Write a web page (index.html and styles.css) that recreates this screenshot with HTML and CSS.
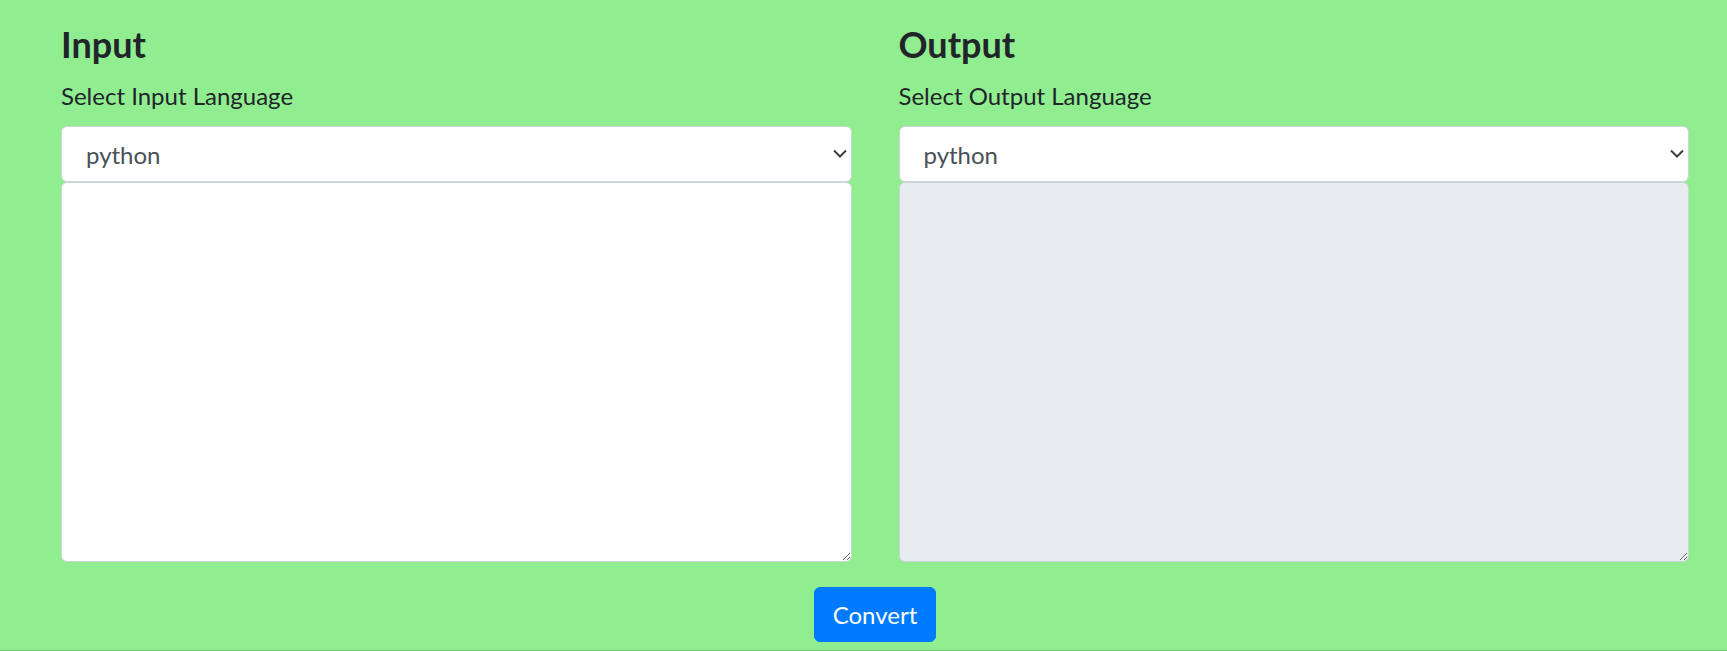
FILE: index.html
```html
<!DOCTYPE html>
<html lang="en">
<head>
  <meta charset="UTF-8">
  <meta name="viewport" content="width=device-width, initial-scale=1.0">
  <title>Code Converter</title>
  <link rel="stylesheet" href="styles.css">
</head>
<body>
  <main class="converter">
    <div class="panes">
      <section class="pane">
        <h2>Input</h2>
        <label for="input-lang">Select Input Language</label>
        <div class="select-wrap">
          <select id="input-lang" class="lang-select">
            <option>python</option>
            <option>java</option>
            <option>javascript</option>
            <option>c++</option>
          </select>
          <svg class="chevron" width="14" height="9" viewBox="0 0 14 9"><path d="M1 1.5 L7 7.5 L13 1.5" fill="none" stroke="#3c4043" stroke-width="2"/></svg>
        </div>
        <textarea id="input-code" class="code-box"></textarea>
      </section>
      <section class="pane">
        <h2>Output</h2>
        <label for="output-lang">Select Output Language</label>
        <div class="select-wrap">
          <select id="output-lang" class="lang-select">
            <option>python</option>
            <option>java</option>
            <option>javascript</option>
            <option>c++</option>
          </select>
          <svg class="chevron" width="14" height="9" viewBox="0 0 14 9"><path d="M1 1.5 L7 7.5 L13 1.5" fill="none" stroke="#3c4043" stroke-width="2"/></svg>
        </div>
        <textarea id="output-code" class="code-box readonly" readonly></textarea>
      </section>
    </div>
    <div class="actions">
      <button type="button" class="btn-convert">Convert</button>
    </div>
  </main>
</body>
</html>
```

FILE: styles.css
```css
body {
  margin: 0;
  background: #90ee90;
  font-family: Lato, "Segoe UI", "Open Sans", sans-serif;
  color: #212529;
}

.converter {
  padding: 23px 38px 8px 61px;
  border-bottom: 1px solid #70c86e;
}

.panes {
  display: grid;
  grid-template-columns: 1fr 1fr;
  column-gap: 47px;
}

.pane h2 {
  margin: 0 0 12px;
  font-size: 36px;
  line-height: 1.2;
  font-weight: 700;
}

.pane label {
  display: block;
  font-size: 24px;
  line-height: 36px;
  margin-bottom: 12px;
}

.select-wrap {
  position: relative;
}

.lang-select {
  display: block;
  width: 100%;
  height: 56px;
  box-sizing: border-box;
  padding: 0 40px 0 24px;
  border: 1px solid #ced4da;
  border-radius: 6px;
  background: #ffffff;
  color: #495057;
  font-family: inherit;
  font-size: 24px;
  -webkit-appearance: none;
  appearance: none;
}

.chevron {
  position: absolute;
  right: 5px;
  top: 23px;
  pointer-events: none;
}

.code-box {
  display: block;
  width: 100%;
  height: 380px;
  box-sizing: border-box;
  margin: 0;
  padding: 9px 18px;
  border: 1px solid #ced4da;
  border-radius: 6px;
  background: #ffffff;
  font-family: inherit;
  font-size: 24px;
  resize: vertical;
}

.code-box.readonly {
  background: #e9ecef;
}

.actions {
  display: flex;
  justify-content: center;
  margin-top: 25px;
}

.btn-convert {
  height: 55px;
  padding: 0 18px;
  border: 1px solid #007bff;
  border-radius: 6px;
  background: #007bff;
  color: #ffffff;
  font-family: inherit;
  font-size: 24px;
  cursor: pointer;
}
```
